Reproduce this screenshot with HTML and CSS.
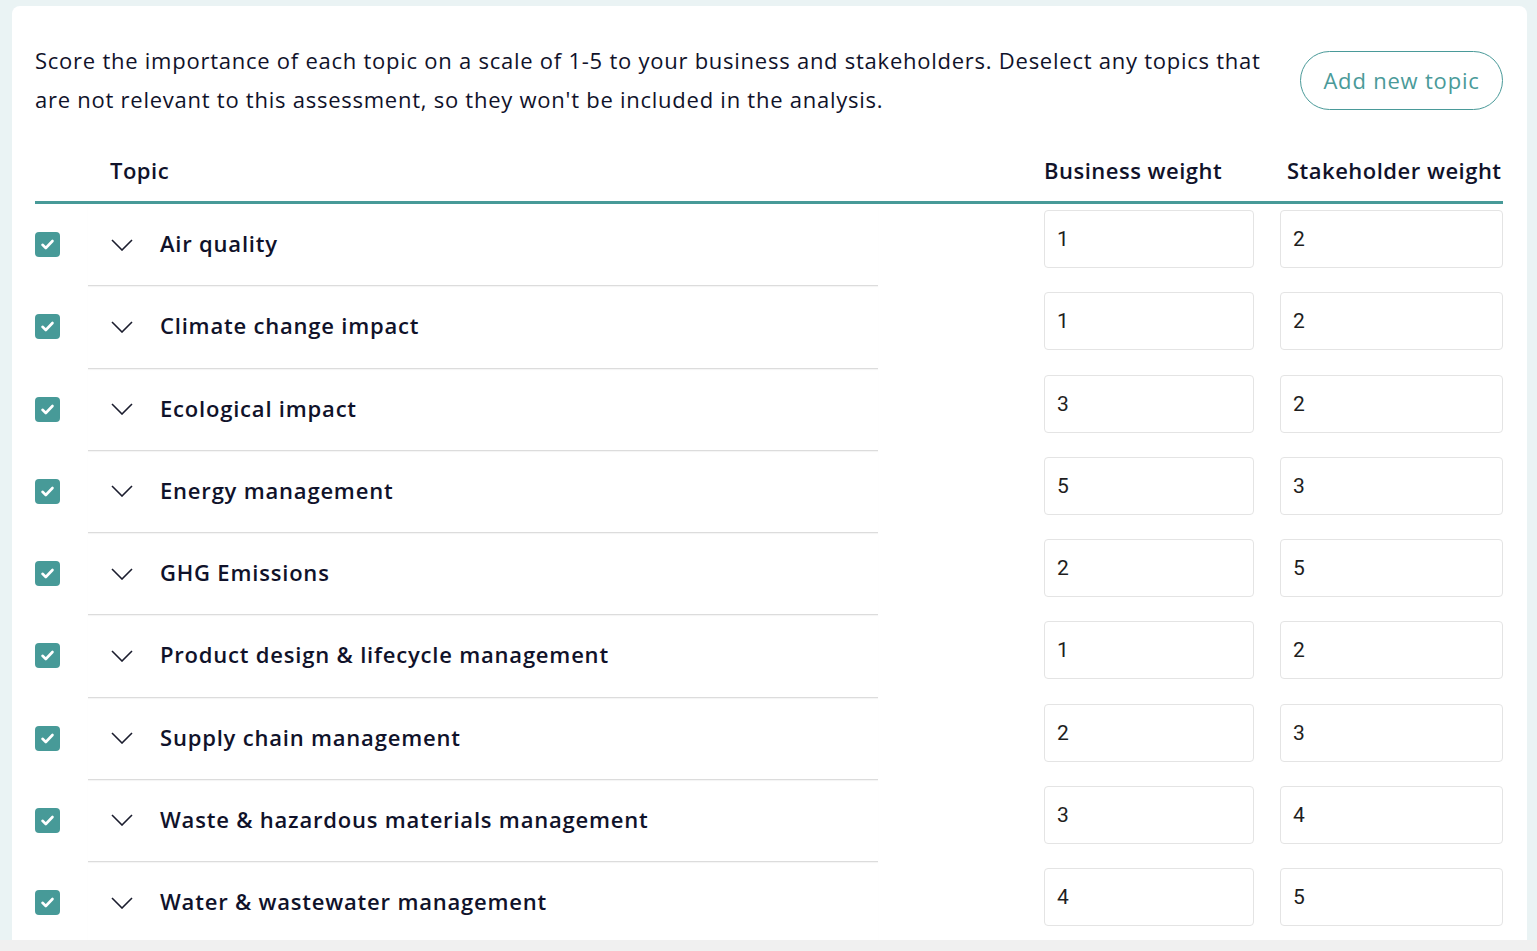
FILE: index.html
```html
<!DOCTYPE html>
<html lang="en">
<head>
<meta charset="utf-8">
<title>Topics</title>
<link rel="stylesheet" href="styles.css">
</head>
<body>
<div class="main">
  <section class="card">
    <div class="intro">
      <p class="intro-text">Score the importance of each topic on a scale of 1-5 to your business and stakeholders. Deselect any topics that are not relevant to this assessment, so they won't be included in the analysis.</p>
      <button class="add-btn">Add new topic</button>
    </div>
    <div class="table">
      <div class="thead">
        <div class="th th-topic">Topic</div>
        <div class="th th-bw">Business weight</div>
        <div class="th th-sw">Stakeholder weight</div>
      </div>
      <div id="rows"></div>
    </div>
  </section>
</div>
<footer class="footer"><span class="version">Version 1.0.1</span><span class="corner">D</span></footer>
<script src="app.js"></script>
</body>
</html>
```
FILE: app.js
```js
const topics = [
  ["Air quality", 1, 2],
  ["Climate change impact", 1, 2],
  ["Ecological impact", 3, 2],
  ["Energy management", 5, 3],
  ["GHG Emissions", 2, 5],
  ["Product design & lifecycle management", 1, 2],
  ["Supply chain management", 2, 3],
  ["Waste & hazardous materials management", 3, 4],
  ["Water & wastewater management", 4, 5]
];
const rows = document.getElementById("rows");
topics.forEach(([name, b, s]) => {
  const row = document.createElement("div");
  row.className = "row";
  row.innerHTML = `
    <div class="cb"><svg viewBox="0 0 25 25" width="25" height="25"><rect width="25" height="25" rx="4" fill="#479a98"/><path d="M7.5 12.8 L10.8 16 L17.5 9" fill="none" stroke="#fff" stroke-width="2.6" stroke-linecap="round" stroke-linejoin="round"/></svg></div>
    <div class="topic">
      <svg class="chev" viewBox="0 0 22 12" width="22" height="12"><path d="M1 1 L11 11 L21 1" fill="none" stroke="#1b1d2e" stroke-width="1.6"/></svg>
      <span class="name"></span>
    </div>
    <div class="spacer"></div>
    <input class="inp" type="text">
    <input class="inp" type="text">`;
  row.querySelector(".name").textContent = name;
  const inps = row.querySelectorAll("input");
  inps[0].value = b;
  inps[1].value = s;
  rows.appendChild(row);
});
```
FILE: styles.css
```css
* { box-sizing: border-box; }
html, body {
  margin: 0;
  height: 951px;
  overflow: hidden;
  background: #eaf3f4;
  font-family: "Open Sans", "Noto Sans", sans-serif;
  color: #10122a;
}
.main {
  height: 940px;
  padding: 6px 10px 0 12px;
  overflow: hidden;
}
.card {
  background: #fff;
  border-radius: 8px 8px 0 0;
  height: 1000px;
  padding: 35px 24px 0 23px;
}
.intro {
  display: flex;
  align-items: center;
  justify-content: space-between;
}
.intro-text {
  margin: 0;
  width: 1250px;
  font-size: 22px;
  letter-spacing: 0.75px;
  line-height: 39px;
  color: #10122a;
}
.add-btn {
  width: 203px;
  height: 59px;
  border: 1.5px solid #4a9a99;
  border-radius: 30px;
  background: #fff;
  color: #4a9a99;
  font-family: inherit;
  font-size: 22px;
  letter-spacing: 0.8px;
  padding: 0;
}
.thead {
  margin-top: 21px;
  display: grid;
  grid-template-columns: 75px 934px 243px 1fr;
  border-bottom: 3px solid #479a98;
  height: 64px;
  align-items: center;
  padding-bottom: 1px;
}
.th {
  font-weight: 600;
  font-size: 22px;
  letter-spacing: 0.5px;
}
.th-topic { grid-column: 2; }
.th-bw { grid-column: 3; }
.th-sw { grid-column: 4; }
.row {
  display: grid;
  grid-template-columns: 53px 790px 166px 210px 26px 223px;
  align-items: start;
}
.cb {
  height: 25px;
  margin-top: 28px;
}
.cb svg { display: block; }
.topic {
  height: 82.25px;
  border-bottom: 1px solid #dcdcdc;
  box-shadow: 0 1px 1px rgba(0,0,0,0.04);
  display: flex;
  align-items: center;
  padding-left: 23px;
  padding-bottom: 3px;
}
.chev { display: block; margin-right: 27px; margin-top: 3px; }
.name {
  font-weight: 600;
  font-size: 22px;
  letter-spacing: 0.8px;
}
.inp {
  margin-top: 6px;
  height: 58px;
  border: 1px solid #e4e4e4;
  border-radius: 4px;
  padding: 0 12px 0 12px;
  font-family: Roboto, "Liberation Sans", sans-serif;
  font-size: 21px;
  color: #1e1e1e;
  background: #fff;
  outline: none;
}
.row .inp:nth-of-type(1) { grid-column: 4; }
.row .inp:nth-of-type(2) { grid-column: 6; }
.footer {
  height: 11px;
  background: #f0f0f0;
  position: relative;
  font-family: "Open Sans", sans-serif;
  font-size: 18px;
  color: #4a9a99;
  overflow: hidden;
}
.version {
  position: absolute;
  left: 718px;
  top: 6px;
}
.corner {
  position: absolute;
  left: 1521px;
  top: 6px;
  color: #4a6fd0;
}
```
